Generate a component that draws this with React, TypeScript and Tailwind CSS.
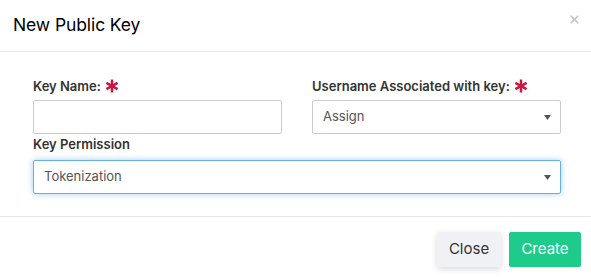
import { X } from "lucide-react";

function Req() {
  return (
    <svg width="14" height="14" viewBox="0 0 14 14" className="ml-[4px] -mt-[2px]">
      <g stroke="#c9173f" strokeWidth="2.5" strokeLinecap="butt">
        <path d="M7 0.5v13" />
        <path d="M1.4 3.8L12.6 10.2" />
        <path d="M1.4 10.2L12.6 3.8" />
      </g>
    </svg>
  );
}

function Select({ value, focus }: { value: string; focus?: boolean }) {
  return (
    <div
      className={
        "flex h-[34px] items-center justify-between rounded-[2px] border bg-white pl-[10px] pr-[9px] text-[13px] text-[#555] " +
        (focus ? "border-[#66afe9] shadow-[0_0_6px_rgba(102,175,233,0.6)]" : "border-[#ccc]")
      }
    >
      <span>{value}</span>
      <svg width="7" height="5" viewBox="0 0 7 5" className="mt-[1px]">
        <path d="M0 0h7L3.5 5z" fill="#555" />
      </svg>
    </div>
  );
}

export default function App() {
  return (
    <div className="w-[591px] h-[277px] bg-white font-['Inter',sans-serif] text-[#222]">
      <div className="flex h-[52px] items-center justify-between border-b border-[#e5e5e5] pl-[13px] pr-[10px]">
        <h4 className="text-[17.5px] font-normal tracking-[-0.1px] text-black">New Public Key</h4>
        <X className="w-[13px] h-[13px] text-[#c4c4c4] -mt-[12px]" strokeWidth={3.2} />
      </div>
      <div className="border-b border-[#e5e5e5] pl-[33px] pr-[30px] pt-[23px] pb-[22px]">
        <div className="grid grid-cols-2 gap-x-[30px]">
          <div>
            <label className="flex h-[24px] items-center text-[13px] font-semibold text-[#333]">
              Key Name:<Req />
            </label>
            <input className="mt-[1px] block h-[34px] w-full rounded-[2px] border border-[#ccc] outline-none" />
          </div>
          <div>
            <label className="flex h-[24px] items-center text-[13px] font-semibold text-[#333]">
              Username Associated with key:<Req />
            </label>
            <div className="mt-[1px]">
              <Select value="Assign" />
            </div>
          </div>
        </div>
        <label className="mt-[1px] flex h-[20px] items-center text-[13px] font-semibold text-[#333]">Key Permission</label>
        <div className="mt-[5px]">
          <Select value="Tokenization" focus />
        </div>
      </div>
      <div className="flex justify-end gap-[8px] pr-[10px] pt-[15px]">
        <button className="h-[35px] w-[64px] rounded-[2px] bg-[#f0f1f4] text-[15px] text-[#333] shadow-[0_2px_6px_rgba(0,0,0,0.15)]">
          Close
        </button>
        <button className="h-[35px] w-[72px] rounded-[2px] bg-[#1ecb8b] text-[15px] text-white">Create</button>
      </div>
    </div>
  );
}
